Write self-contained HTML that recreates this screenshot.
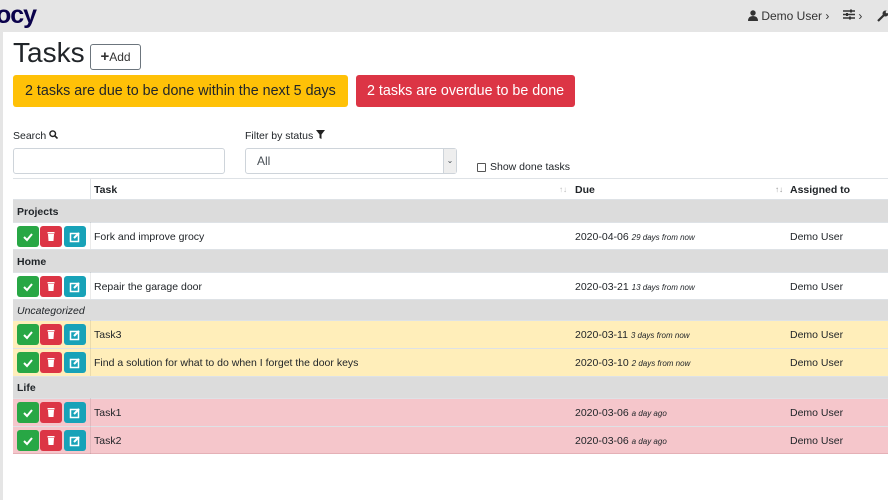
<!DOCTYPE html>
<html><head><meta charset="utf-8"><style>
*{box-sizing:border-box;margin:0;padding:0}
body{width:888px;height:500px;overflow:hidden;background:#fff;font-family:"Liberation Sans","DejaVu Sans",sans-serif;color:#212529;position:relative}
.nav{position:absolute;left:0;top:0;width:888px;height:32px;background:#e5e5e5}
.logo{position:absolute;left:-4px;top:0px;font-size:25px;font-weight:bold;color:#0b024c;letter-spacing:-1px;line-height:30px}
.side{position:absolute;left:0;top:32px;width:3px;height:468px;background:#e5e5e5}
.abs{position:absolute}
.btn{display:inline-block;width:22px;height:21px;border-radius:3px;position:absolute}
.row{position:absolute;left:13px;width:875px;border-top:1px solid #dee2e6;font-size:10.5px}
.grp{background:#dcdcdc;font-weight:bold;font-size:10.5px}
</style></head><body>
<div class="nav"><div class="logo">ocy</div>
<div class="abs" style="left:748px;top:9px;font-size:12px;color:#333">
<svg width="10" height="11" viewBox="0 0 10 11" style="vertical-align:-1px"><circle cx="5" cy="3" r="2.7" fill="#333"/><path d="M0 11 Q0 6 5 6 Q10 6 10 11Z" fill="#333"/></svg> Demo User <span style="font-size:12px">›</span></div>
<div class="abs" style="left:843px;top:9px;font-size:12px;color:#333">
<svg width="12" height="11" viewBox="0 0 12 11"><path d="M0 2h12M0 5.5h12M0 9h12" stroke="#333" stroke-width="1.5"/><rect x="7" y="0.5" width="2" height="3" fill="#333"/><rect x="3" y="4" width="2" height="3" fill="#333"/><rect x="6" y="7.5" width="2" height="3" fill="#333"/></svg> ›</div>
<div class="abs" style="left:877px;top:9px"><svg width="12" height="12" viewBox="0 0 12 12"><path d="M1 11L7 5" stroke="#333" stroke-width="2.2"/><circle cx="8.5" cy="3.5" r="3" fill="#333"/><circle cx="10" cy="2" r="1.3" fill="#e5e5e5"/></svg></div>
</div>
<div class="side"></div>
<div class="abs" style="left:13px;top:37px;font-size:28px;color:#212529">Tasks</div>
<div class="abs" style="left:90px;top:44px;width:51px;height:26px;border:1px solid #6c757d;border-radius:3px;font-size:12px;line-height:24px;text-align:center;color:#333"><b style="font-size:15px">+</b>Add</div>
<div class="abs" style="left:13px;top:75px;width:335px;height:32px;background:#ffc107;border-radius:3px;font-size:14.3px;line-height:33px;padding-left:12px;color:#212529">2 tasks are due to be done within the next 5 days</div>
<div class="abs" style="left:356px;top:75px;width:219px;height:32px;background:#dc3545;border-radius:3px;font-size:14.3px;line-height:33px;padding-left:11px;color:#fff">2 tasks are overdue to be done</div>
<div class="abs" style="left:13px;top:130px;font-size:10.5px">Search <svg width="9" height="9" viewBox="0 0 9 9"><circle cx="3.7" cy="3.7" r="2.8" fill="none" stroke="#222" stroke-width="1.4"/><path d="M5.8 5.8L8.5 8.5" stroke="#222" stroke-width="1.6"/></svg></div>
<div class="abs" style="left:13px;top:148px;width:212px;height:26px;border:1px solid #ced4da;border-radius:3px"></div>
<div class="abs" style="left:245px;top:130px;font-size:10.5px">Filter by status <svg width="9" height="9" viewBox="0 0 9 9"><path d="M0 0h9L5.5 4.5V9L3.5 8V4.5Z" fill="#222"/></svg></div>
<div class="abs" style="left:245px;top:148px;width:212px;height:26px;border:1px solid #ced4da;border-radius:3px;font-size:12px;line-height:25px;padding-left:11px;color:#495057">All<div class="abs" style="right:0;top:0;width:13px;height:24px;border-left:1px solid #ced4da;background:#eee;font-size:8px;text-align:center;line-height:24px">⌄</div></div>
<div class="abs" style="left:477px;top:163px;width:9px;height:9px;border:1px solid #555;border-radius:1px"></div>
<div class="abs" style="left:490px;top:161px;font-size:10.5px">Show done tasks</div>

<div class="row" style="top:178px;height:21px;font-weight:bold;line-height:22px">
<span class="abs" style="left:77px;top:0;height:21px;border-left:1px solid #dee2e6"></span>
<span class="abs" style="left:81px">Task</span><span class="abs" style="left:546px;color:#bbb;font-weight:normal;font-size:8px">↑↓</span>
<span class="abs" style="left:562px">Due</span><span class="abs" style="left:762px;color:#999;font-weight:normal;font-size:8px">↑↓</span>
<span class="abs" style="left:777px">Assigned to</span></div>

<div class="row grp" style="top:199px;height:23px;line-height:24px;padding-left:4px">Projects</div>
<div class="row" style="top:222px;height:27px;background:#fff"></div>
<div class="row grp" style="top:249px;height:23px;line-height:24px;padding-left:4px">Home</div>
<div class="row" style="top:272px;height:27px;background:#fff"></div>
<div class="row grp" style="top:299px;height:21px;line-height:22px;padding-left:4px;font-weight:normal;font-style:italic">Uncategorized</div>
<div class="row" style="top:320px;height:28px;background:#ffeeba"></div>
<div class="row" style="top:348px;height:28px;background:#ffeeba"></div>
<div class="row grp" style="top:376px;height:22px;line-height:23px;padding-left:4px">Life</div>
<div class="row" style="top:398px;height:28px;background:#f5c6cb"></div>
<div class="row" style="top:426px;height:28px;background:#f5c6cb;border-bottom:1px solid #e4b0b6"></div>

<div id="cells"></div>
<script>
var rows=[[222,27,"Fork and improve grocy","2020-04-06","29 days from now"],[272,27,"Repair the garage door","2020-03-21","13 days from now"],[320,28,"Task3","2020-03-11","3 days from now"],[348,28,"Find a solution for what to do when I forget the door keys","2020-03-10","2 days from now"],[398,28,"Task1","2020-03-06","a day ago"],[426,28,"Task2","2020-03-06","a day ago"]];
var h="";
rows.forEach(function(r){var t=r[0],c=t+Math.round(r[1]/2);
var by=c-10;
h+='<div class="btn" style="left:17px;top:'+by+'px;background:#28a745"><svg width="22" height="21"><path d="M7 11l3 3 5-6" stroke="#fff" stroke-width="2" fill="none"/></svg></div>';
h+='<div class="btn" style="left:40px;top:'+by+'px;background:#dc3545"><svg width="22" height="21"><rect x="7.5" y="6" width="7" height="1.5" fill="#fff"/><path d="M8 8h6l-.5 7h-5z" fill="#fff"/></svg></div>';
h+='<div class="btn" style="left:64px;top:'+by+'px;background:#17a2b8"><svg width="22" height="21"><rect x="6.5" y="7.5" width="8" height="8" fill="none" stroke="#fff" stroke-width="1.5"/><path d="M10 12l5-5" stroke="#fff" stroke-width="2"/></svg></div>';
h+='<div class="abs" style="left:90px;top:'+t+'px;height:'+r[1]+'px;border-left:1px solid rgba(0,0,0,.08)"></div>';
h+='<div class="abs" style="left:94px;top:'+(c-5)+'px;font-size:10.5px">'+r[2]+'</div>';
h+='<div class="abs" style="left:575px;top:'+(c-5)+'px;font-size:10.5px">'+r[3]+' <i style="font-size:8px">'+r[4]+'</i></div>';
h+='<div class="abs" style="left:790px;top:'+(c-5)+'px;font-size:10.5px">Demo User</div>';});
document.getElementById("cells").innerHTML=h;
</script>
</body></html>
